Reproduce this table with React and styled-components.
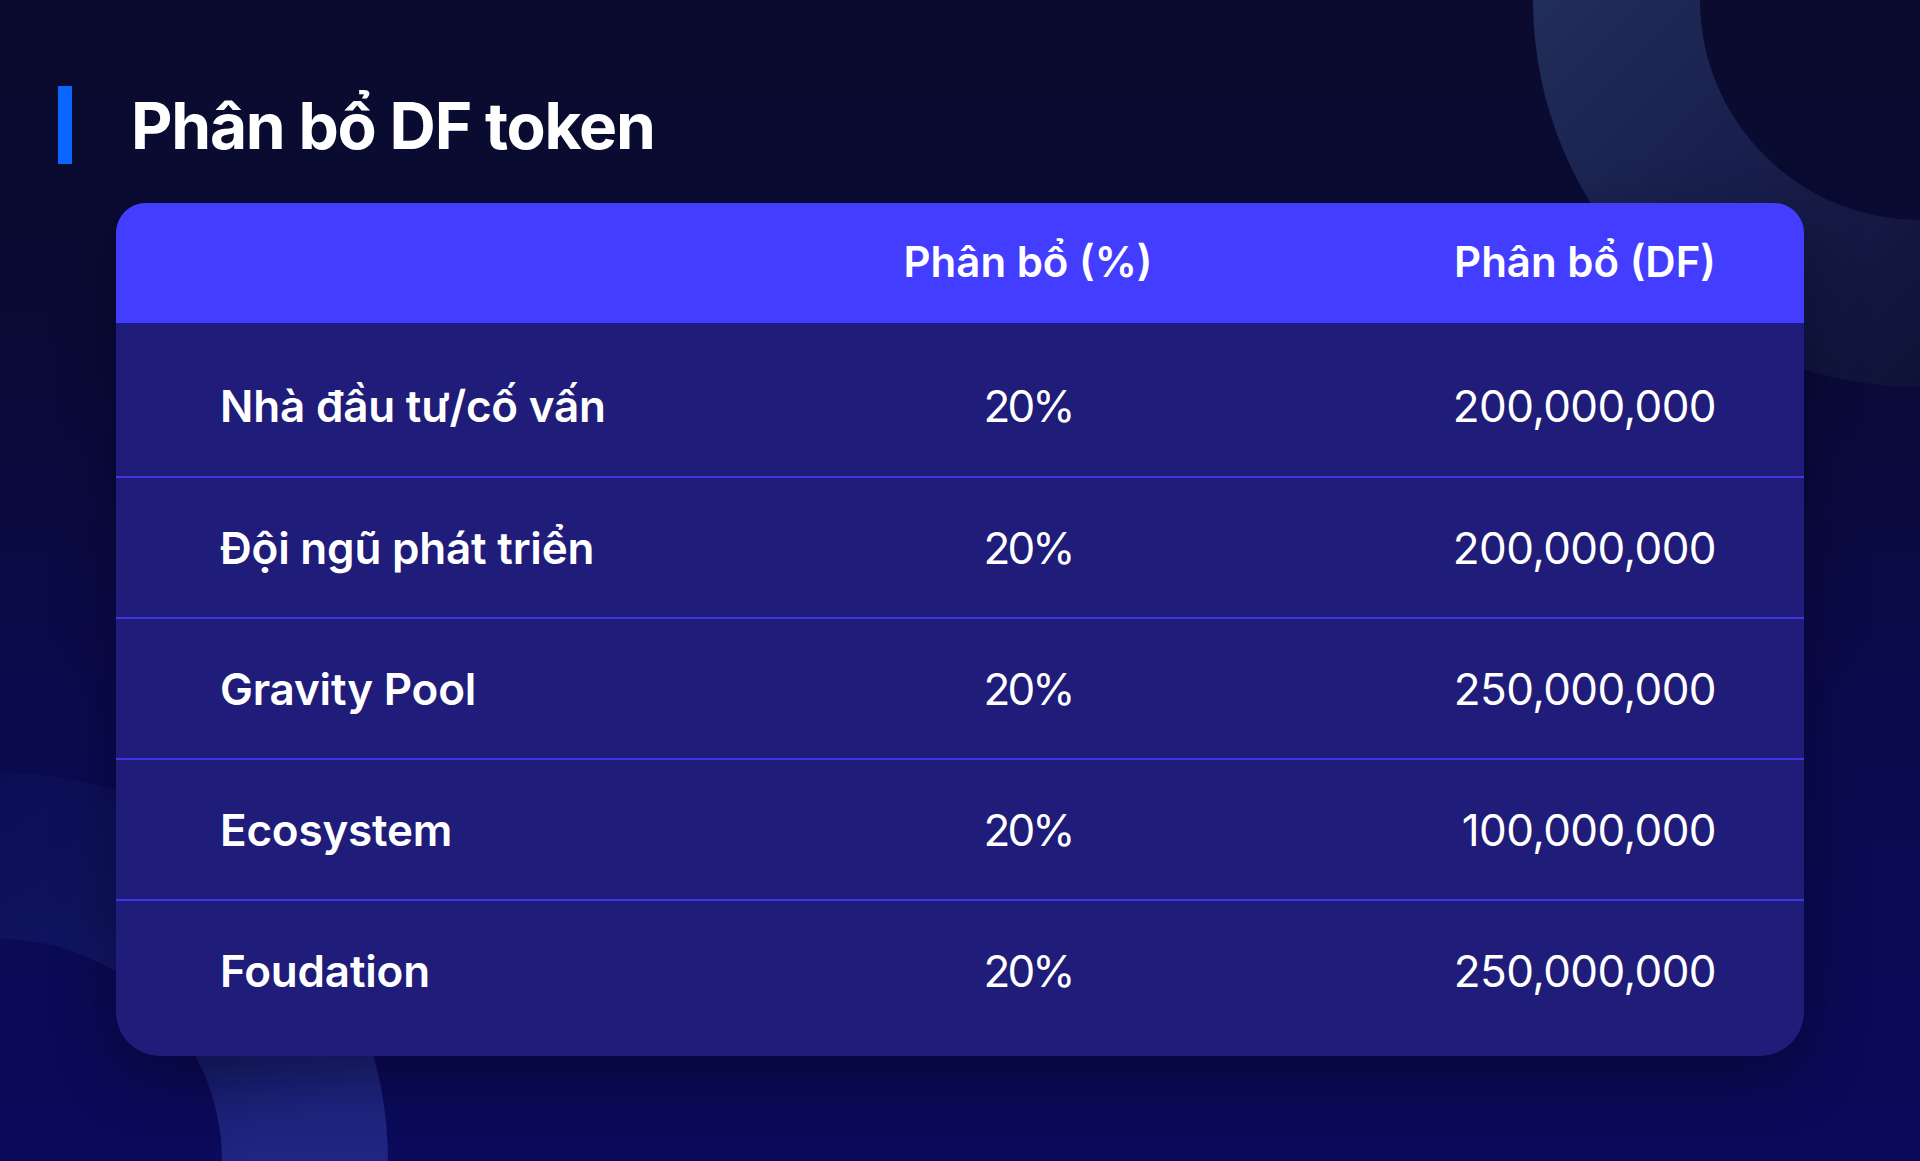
import styled, { createGlobalStyle } from "styled-components";

const rows = [
  { name: "Nhà đầu tư/cố vấn", pct: "20%", amount: "200,000,000" },
  { name: "Đội ngũ phát triển", pct: "20%", amount: "200,000,000" },
  { name: "Gravity Pool", pct: "20%", amount: "250,000,000" },
  { name: "Ecosystem", pct: "20%", amount: "100,000,000" },
  { name: "Foudation", pct: "20%", amount: "250,000,000" },
];

const App = () => {
  return (
    <Page>
      <GlobalStyle />
      {/* background rings in the corners */}
      <TopRing viewBox="0 0 387 387" width="387" height="387">
        <defs>
          <linearGradient id="ringTop" x1="0" y1="0" x2="1" y2="1">
            <stop offset="0%" stopColor="#212d5a" />
            <stop offset="55%" stopColor="#181d4a" />
            <stop offset="100%" stopColor="#0f1238" />
          </linearGradient>
        </defs>
        <path
          d="M0 0 A387 387 0 0 0 387 387 L387 220 A220 220 0 0 1 167 0 Z"
          fill="url(#ringTop)"
        />
      </TopRing>
      <BottomRing viewBox="0 0 388 388" width="388" height="388">
        <defs>
          <linearGradient id="ringBottom" x1="0" y1="0" x2="0.6" y2="1">
            <stop offset="0%" stopColor="#0c0e55" />
            <stop offset="40%" stopColor="#10145e" />
            <stop offset="100%" stopColor="#1f2580" />
          </linearGradient>
        </defs>
        <path
          d="M0 0 A388 388 0 0 1 388 388 L222 388 A222 222 0 0 0 0 166 Z"
          fill="url(#ringBottom)"
        />
      </BottomRing>

      <Content>
        <TitleRow>
          <TitleBar />
          <Title>Phân bổ DF token</Title>
        </TitleRow>

        <Card>
          <HeadRow>
            <Cell />
            <Cell $align="center">Phân bổ (%)</Cell>
            <Cell $align="right">Phân bổ (DF)</Cell>
          </HeadRow>
          <Body>
            {rows.map((r, i) => (
              <Row key={r.name} $first={i === 0}>
                <Label>{r.name}</Label>
                <Percent>{r.pct}</Percent>
                <Amount>{r.amount}</Amount>
              </Row>
            ))}
          </Body>
        </Card>
      </Content>
    </Page>
  );
};

const GlobalStyle = createGlobalStyle`
  html, body {
    margin: 0;
    padding: 0;
    background: #0a0b2e;
  }
  * {
    box-sizing: border-box;
  }
`;

const Page = styled.div`
  position: relative;
  width: 100%;
  height: 100vh;
  min-height: 1161px;
  overflow: hidden;
  background: linear-gradient(180deg, #0a0b2d 0%, #0a0b36 30%, #0b0a4d 60%, #0b0a5b 100%);
  font-family: Inter, "Noto Sans", sans-serif;
  color: #ffffff;
`;

const TopRing = styled.svg`
  position: absolute;
  top: 0;
  right: 0;
`;

const BottomRing = styled.svg`
  position: absolute;
  left: 0;
  bottom: 0;
`;

const Content = styled.div`
  position: relative;
  padding: 86px 0 0 58px;
  display: flex;
  flex-direction: column;
  gap: 39px;
`;

const TitleRow = styled.div`
  display: flex;
  align-items: center;
  gap: 59px;
  height: 78px;
`;

const TitleBar = styled.div`
  width: 14px;
  height: 78px;
  background: #0a66ff;
`;

const Title = styled.h1`
  margin: 0;
  font-size: 64px;
  font-weight: 700;
  letter-spacing: -1.2px;
  line-height: 1;
  padding-top: 2px;
`;

const Card = styled.div`
  margin-left: 58px;
  width: 1688px;
  border-radius: 30px 30px 44px 44px;
  overflow: hidden;
  background: #201c79;
  box-shadow: 0 24px 60px rgba(4, 4, 28, 0.45);
`;

const Grid = styled.div`
  display: grid;
  grid-template-columns: 608px 400px 1fr;
  align-items: center;
  padding: 0 88px 0 104px;
`;

const HeadRow = styled(Grid)`
  height: 120px;
  padding-bottom: 4px;
  background: #433dff;
  font-size: 42px;
  font-weight: 600;
`;

const Cell = styled.div`
  text-align: ${(p) => p.$align || "left"};
`;

const Body = styled.div`
  padding: 12px 0 16px;
`;

const Row = styled(Grid)`
  height: 141px;
  border-top: ${(p) => (p.$first ? "none" : "2px solid #3b37e2")};
  font-size: 44px;
`;

const Label = styled.div`
  font-weight: 600;
  letter-spacing: -0.2px;
`;

const Percent = styled.div`
  font-weight: 400;
  letter-spacing: -3px;
  text-align: center;
`;

const Amount = styled.div`
  font-weight: 400;
  letter-spacing: -0.6px;
  text-align: right;
`;

export default App;
